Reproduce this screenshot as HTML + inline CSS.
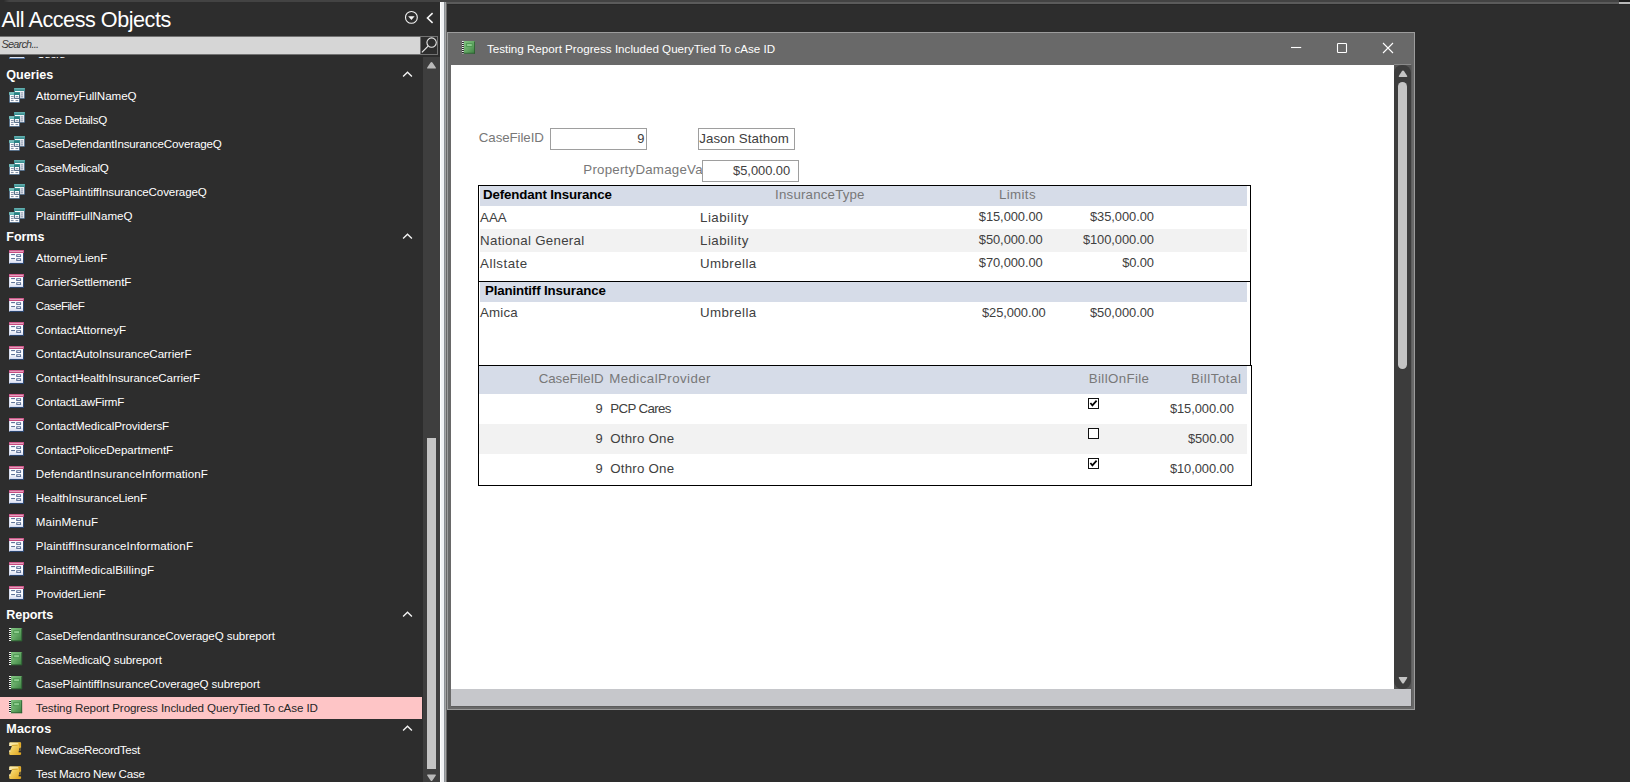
<!DOCTYPE html>
<html lang="en"><head><meta charset="utf-8"><title>Access</title>
<style>
html,body{margin:0;padding:0;}
body{width:1630px;height:782px;overflow:hidden;background:#2d2d2d;position:relative;font-family:"Liberation Sans",sans-serif;}
div,span,svg{position:absolute;}
.tx{white-space:nowrap;line-height:1;margin:0;padding:0;}
.ic{overflow:visible;}
</style></head><body>

<div style="left:0;top:0;width:1630px;height:2px;background:#434343"></div>
<div style="left:0;top:0;width:9px;height:2px;background:linear-gradient(90deg,#2d2d2d 40%,#434343)"></div>
<div style="left:446px;top:2px;width:1184px;height:2px;background:#5b5b5b"></div>
<div style="left:446px;top:4px;width:1184px;height:1px;background:#282828"></div>
<div style="left:1619px;top:0;width:11px;height:2px;background:#1c1c1c"></div>
<div style="left:1619px;top:2px;width:11px;height:2px;background:#b8b8b8"></div>
<div id="nav" style="left:0;top:2px;width:440px;height:780px;background:#2d2d2d"></div>
<div style="left:-1px;top:36px;width:439px;height:19px;box-sizing:border-box;border:1px solid #727272;background:#d6d6d6"></div>
<div style="left:420px;top:36px;width:18px;height:19px;box-sizing:border-box;border:1px solid #727272;background:#2d2d2d"></div>
<svg style="left:420px;top:36px" width="18" height="19" viewBox="0 0 18 19"><circle cx="11.6" cy="6.6" r="4.7" fill="none" stroke="#e8e8e8" stroke-width="1.1"/><path d="M8.1 10.1 L1.9 16.4" stroke="#e8e8e8" stroke-width="1.2" fill="none"/></svg>
<svg style="left:403px;top:10px" width="17" height="16" viewBox="0 0 17 16"><circle cx="8.4" cy="7.4" r="5.9" fill="none" stroke="#f4f4f4" stroke-width="1.1"/><path d="M5.2 6.2 L11.6 6.2 L8.4 10 Z" fill="#f4f4f4"/></svg>
<svg style="left:424px;top:9px" width="12" height="18" viewBox="0 0 12 18"><path d="M8.6 4.2 L3.5 9 L8.6 13.8" fill="none" stroke="#f4f4f4" stroke-width="1.6"/></svg>
<div style="left:0;top:57px;width:422px;height:3px;overflow:hidden"><div style="left:9px;top:-11px;width:16px;height:13px;background:#dfe6f3;border:1px solid #4c6a92;border-top:0;box-sizing:border-box"></div><span class="tx" style="left:37px;top:-9px;font-size:11.6px;letter-spacing:-0.5px;color:#fff">Users</span></div>
<div style="left:0;top:697px;width:422px;height:22px;background:#fec5c6"></div>
<div style="left:423px;top:57px;width:17px;height:725px;background:#3e3e3e"></div>
<div style="left:427px;top:438px;width:9px;height:331px;background:#c4c4c4"></div>
<svg style="left:426px;top:61px" width="12" height="9" viewBox="0 0 12 9"><path d="M5.5 1 Q6 1 6.4 1.6 L9.8 6.4 Q10.3 7.6 9.2 7.6 L1.8 7.6 Q0.7 7.6 1.2 6.4 L4.6 1.6 Q5 1 5.5 1Z" fill="#b9b9b9"/></svg>
<svg style="left:426px;top:773px" width="12" height="9" viewBox="0 0 12 9"><path d="M5.5 8 Q6 8 6.4 7.4 L9.8 2.6 Q10.3 1.4 9.2 1.4 L1.8 1.4 Q0.7 1.4 1.2 2.6 L4.6 7.4 Q5 8 5.5 8Z" fill="#b9b9b9"/></svg>
<svg style="left:401px;top:70px" width="12" height="8" viewBox="0 0 12 8"><path d="M2.1 6.6 L6.5 2.3 L10.9 6.6" fill="none" stroke="#f4f4f4" stroke-width="1.4"/></svg>
<svg style="left:401px;top:232px" width="12" height="8" viewBox="0 0 12 8"><path d="M2.1 6.6 L6.5 2.3 L10.9 6.6" fill="none" stroke="#f4f4f4" stroke-width="1.4"/></svg>
<svg style="left:401px;top:610px" width="12" height="8" viewBox="0 0 12 8"><path d="M2.1 6.6 L6.5 2.3 L10.9 6.6" fill="none" stroke="#f4f4f4" stroke-width="1.4"/></svg>
<svg style="left:401px;top:724px" width="12" height="8" viewBox="0 0 12 8"><path d="M2.1 6.6 L6.5 2.3 L10.9 6.6" fill="none" stroke="#f4f4f4" stroke-width="1.4"/></svg>
<svg class="ic" style="left:9px;top:88px" width="16" height="15" viewBox="0 0 16 15">
<rect x="5" y="0" width="11" height="11" fill="#33506f"/><rect x="5" y="0" width="11" height="3" fill="#3a8f90"/><rect x="5.3" y="0.4" width="10.4" height="0.9" fill="#7fc4c2"/>
<rect x="5.8" y="3" width="9.4" height="7.2" fill="#ffffff"/><rect x="11" y="3.4" width="3.8" height="6.6" fill="#e6e9f1"/>
<rect x="11.7" y="4.4" width="2.4" height="1" fill="#8693a8"/><rect x="11.7" y="6.4" width="2.4" height="1" fill="#8693a8"/><rect x="11.7" y="8.3" width="2.4" height="1" fill="#8693a8"/>
<rect x="0" y="4.2" width="11" height="10.8" fill="#33506f"/><rect x="0" y="4.2" width="11" height="2.8" fill="#62b3b1"/><rect x="0.3" y="4.5" width="10.4" height="0.9" fill="#9ad5d1"/><rect x="5" y="4.3" width="5.8" height="2.7" fill="#2a8384"/>
<rect x="0.8" y="7" width="9.4" height="7.2" fill="#ffffff"/>
<rect x="1.9" y="8" width="2.7" height="1.1" fill="#8693a8"/><rect x="1.9" y="10" width="2.7" height="1.1" fill="#8693a8"/><rect x="1.9" y="12" width="2.7" height="1.1" fill="#8693a8"/>
<path d="M5.4 7 V10.4 H10.6 V7" fill="#ffffff" stroke="#33506f" stroke-width="0.9"/><rect x="6.7" y="8.1" width="2.6" height="1.1" fill="#8693a8"/>
<rect x="6.5" y="12" width="2.7" height="1.1" fill="#8693a8"/>
</svg>
<svg class="ic" style="left:9px;top:112px" width="16" height="15" viewBox="0 0 16 15">
<rect x="5" y="0" width="11" height="11" fill="#33506f"/><rect x="5" y="0" width="11" height="3" fill="#3a8f90"/><rect x="5.3" y="0.4" width="10.4" height="0.9" fill="#7fc4c2"/>
<rect x="5.8" y="3" width="9.4" height="7.2" fill="#ffffff"/><rect x="11" y="3.4" width="3.8" height="6.6" fill="#e6e9f1"/>
<rect x="11.7" y="4.4" width="2.4" height="1" fill="#8693a8"/><rect x="11.7" y="6.4" width="2.4" height="1" fill="#8693a8"/><rect x="11.7" y="8.3" width="2.4" height="1" fill="#8693a8"/>
<rect x="0" y="4.2" width="11" height="10.8" fill="#33506f"/><rect x="0" y="4.2" width="11" height="2.8" fill="#62b3b1"/><rect x="0.3" y="4.5" width="10.4" height="0.9" fill="#9ad5d1"/><rect x="5" y="4.3" width="5.8" height="2.7" fill="#2a8384"/>
<rect x="0.8" y="7" width="9.4" height="7.2" fill="#ffffff"/>
<rect x="1.9" y="8" width="2.7" height="1.1" fill="#8693a8"/><rect x="1.9" y="10" width="2.7" height="1.1" fill="#8693a8"/><rect x="1.9" y="12" width="2.7" height="1.1" fill="#8693a8"/>
<path d="M5.4 7 V10.4 H10.6 V7" fill="#ffffff" stroke="#33506f" stroke-width="0.9"/><rect x="6.7" y="8.1" width="2.6" height="1.1" fill="#8693a8"/>
<rect x="6.5" y="12" width="2.7" height="1.1" fill="#8693a8"/>
</svg>
<svg class="ic" style="left:9px;top:136px" width="16" height="15" viewBox="0 0 16 15">
<rect x="5" y="0" width="11" height="11" fill="#33506f"/><rect x="5" y="0" width="11" height="3" fill="#3a8f90"/><rect x="5.3" y="0.4" width="10.4" height="0.9" fill="#7fc4c2"/>
<rect x="5.8" y="3" width="9.4" height="7.2" fill="#ffffff"/><rect x="11" y="3.4" width="3.8" height="6.6" fill="#e6e9f1"/>
<rect x="11.7" y="4.4" width="2.4" height="1" fill="#8693a8"/><rect x="11.7" y="6.4" width="2.4" height="1" fill="#8693a8"/><rect x="11.7" y="8.3" width="2.4" height="1" fill="#8693a8"/>
<rect x="0" y="4.2" width="11" height="10.8" fill="#33506f"/><rect x="0" y="4.2" width="11" height="2.8" fill="#62b3b1"/><rect x="0.3" y="4.5" width="10.4" height="0.9" fill="#9ad5d1"/><rect x="5" y="4.3" width="5.8" height="2.7" fill="#2a8384"/>
<rect x="0.8" y="7" width="9.4" height="7.2" fill="#ffffff"/>
<rect x="1.9" y="8" width="2.7" height="1.1" fill="#8693a8"/><rect x="1.9" y="10" width="2.7" height="1.1" fill="#8693a8"/><rect x="1.9" y="12" width="2.7" height="1.1" fill="#8693a8"/>
<path d="M5.4 7 V10.4 H10.6 V7" fill="#ffffff" stroke="#33506f" stroke-width="0.9"/><rect x="6.7" y="8.1" width="2.6" height="1.1" fill="#8693a8"/>
<rect x="6.5" y="12" width="2.7" height="1.1" fill="#8693a8"/>
</svg>
<svg class="ic" style="left:9px;top:160px" width="16" height="15" viewBox="0 0 16 15">
<rect x="5" y="0" width="11" height="11" fill="#33506f"/><rect x="5" y="0" width="11" height="3" fill="#3a8f90"/><rect x="5.3" y="0.4" width="10.4" height="0.9" fill="#7fc4c2"/>
<rect x="5.8" y="3" width="9.4" height="7.2" fill="#ffffff"/><rect x="11" y="3.4" width="3.8" height="6.6" fill="#e6e9f1"/>
<rect x="11.7" y="4.4" width="2.4" height="1" fill="#8693a8"/><rect x="11.7" y="6.4" width="2.4" height="1" fill="#8693a8"/><rect x="11.7" y="8.3" width="2.4" height="1" fill="#8693a8"/>
<rect x="0" y="4.2" width="11" height="10.8" fill="#33506f"/><rect x="0" y="4.2" width="11" height="2.8" fill="#62b3b1"/><rect x="0.3" y="4.5" width="10.4" height="0.9" fill="#9ad5d1"/><rect x="5" y="4.3" width="5.8" height="2.7" fill="#2a8384"/>
<rect x="0.8" y="7" width="9.4" height="7.2" fill="#ffffff"/>
<rect x="1.9" y="8" width="2.7" height="1.1" fill="#8693a8"/><rect x="1.9" y="10" width="2.7" height="1.1" fill="#8693a8"/><rect x="1.9" y="12" width="2.7" height="1.1" fill="#8693a8"/>
<path d="M5.4 7 V10.4 H10.6 V7" fill="#ffffff" stroke="#33506f" stroke-width="0.9"/><rect x="6.7" y="8.1" width="2.6" height="1.1" fill="#8693a8"/>
<rect x="6.5" y="12" width="2.7" height="1.1" fill="#8693a8"/>
</svg>
<svg class="ic" style="left:9px;top:184px" width="16" height="15" viewBox="0 0 16 15">
<rect x="5" y="0" width="11" height="11" fill="#33506f"/><rect x="5" y="0" width="11" height="3" fill="#3a8f90"/><rect x="5.3" y="0.4" width="10.4" height="0.9" fill="#7fc4c2"/>
<rect x="5.8" y="3" width="9.4" height="7.2" fill="#ffffff"/><rect x="11" y="3.4" width="3.8" height="6.6" fill="#e6e9f1"/>
<rect x="11.7" y="4.4" width="2.4" height="1" fill="#8693a8"/><rect x="11.7" y="6.4" width="2.4" height="1" fill="#8693a8"/><rect x="11.7" y="8.3" width="2.4" height="1" fill="#8693a8"/>
<rect x="0" y="4.2" width="11" height="10.8" fill="#33506f"/><rect x="0" y="4.2" width="11" height="2.8" fill="#62b3b1"/><rect x="0.3" y="4.5" width="10.4" height="0.9" fill="#9ad5d1"/><rect x="5" y="4.3" width="5.8" height="2.7" fill="#2a8384"/>
<rect x="0.8" y="7" width="9.4" height="7.2" fill="#ffffff"/>
<rect x="1.9" y="8" width="2.7" height="1.1" fill="#8693a8"/><rect x="1.9" y="10" width="2.7" height="1.1" fill="#8693a8"/><rect x="1.9" y="12" width="2.7" height="1.1" fill="#8693a8"/>
<path d="M5.4 7 V10.4 H10.6 V7" fill="#ffffff" stroke="#33506f" stroke-width="0.9"/><rect x="6.7" y="8.1" width="2.6" height="1.1" fill="#8693a8"/>
<rect x="6.5" y="12" width="2.7" height="1.1" fill="#8693a8"/>
</svg>
<svg class="ic" style="left:9px;top:208px" width="16" height="15" viewBox="0 0 16 15">
<rect x="5" y="0" width="11" height="11" fill="#33506f"/><rect x="5" y="0" width="11" height="3" fill="#3a8f90"/><rect x="5.3" y="0.4" width="10.4" height="0.9" fill="#7fc4c2"/>
<rect x="5.8" y="3" width="9.4" height="7.2" fill="#ffffff"/><rect x="11" y="3.4" width="3.8" height="6.6" fill="#e6e9f1"/>
<rect x="11.7" y="4.4" width="2.4" height="1" fill="#8693a8"/><rect x="11.7" y="6.4" width="2.4" height="1" fill="#8693a8"/><rect x="11.7" y="8.3" width="2.4" height="1" fill="#8693a8"/>
<rect x="0" y="4.2" width="11" height="10.8" fill="#33506f"/><rect x="0" y="4.2" width="11" height="2.8" fill="#62b3b1"/><rect x="0.3" y="4.5" width="10.4" height="0.9" fill="#9ad5d1"/><rect x="5" y="4.3" width="5.8" height="2.7" fill="#2a8384"/>
<rect x="0.8" y="7" width="9.4" height="7.2" fill="#ffffff"/>
<rect x="1.9" y="8" width="2.7" height="1.1" fill="#8693a8"/><rect x="1.9" y="10" width="2.7" height="1.1" fill="#8693a8"/><rect x="1.9" y="12" width="2.7" height="1.1" fill="#8693a8"/>
<path d="M5.4 7 V10.4 H10.6 V7" fill="#ffffff" stroke="#33506f" stroke-width="0.9"/><rect x="6.7" y="8.1" width="2.6" height="1.1" fill="#8693a8"/>
<rect x="6.5" y="12" width="2.7" height="1.1" fill="#8693a8"/>
</svg>
<svg class="ic" style="left:9px;top:250px" width="15" height="14" viewBox="0 0 15 14">
<rect x="0" y="0" width="15" height="14" fill="#2b456c"/><rect x="0" y="0" width="15" height="3" fill="#c64c80"/><rect x="0.6" y="0.8" width="13.6" height="1.2" fill="#e59fbd"/>
<rect x="0" y="3" width="14" height="10" fill="#fbfcff"/><rect x="0" y="3" width="0.7" height="10.6" fill="#c9d1e8"/><rect x="0.7" y="10.2" width="13.3" height="2.8" fill="#e4e8f6"/><rect x="0.7" y="12" width="13.3" height="1" fill="#d3daf0"/>
<rect x="2.1" y="4.1" width="3.9" height="1" fill="#50668f"/><rect x="2.1" y="8.1" width="3.9" height="1" fill="#50668f"/>
<rect x="7.2" y="4.2" width="4.9" height="2.8" rx="0.4" fill="#586d96"/><rect x="8.3" y="5.1" width="2.8" height="1" fill="#f4f6fb"/>
<rect x="7.2" y="8.2" width="4.9" height="2.8" rx="0.4" fill="#586d96"/><rect x="8.3" y="9.1" width="2.8" height="1" fill="#f4f6fb"/>
</svg>
<svg class="ic" style="left:9px;top:274px" width="15" height="14" viewBox="0 0 15 14">
<rect x="0" y="0" width="15" height="14" fill="#2b456c"/><rect x="0" y="0" width="15" height="3" fill="#c64c80"/><rect x="0.6" y="0.8" width="13.6" height="1.2" fill="#e59fbd"/>
<rect x="0" y="3" width="14" height="10" fill="#fbfcff"/><rect x="0" y="3" width="0.7" height="10.6" fill="#c9d1e8"/><rect x="0.7" y="10.2" width="13.3" height="2.8" fill="#e4e8f6"/><rect x="0.7" y="12" width="13.3" height="1" fill="#d3daf0"/>
<rect x="2.1" y="4.1" width="3.9" height="1" fill="#50668f"/><rect x="2.1" y="8.1" width="3.9" height="1" fill="#50668f"/>
<rect x="7.2" y="4.2" width="4.9" height="2.8" rx="0.4" fill="#586d96"/><rect x="8.3" y="5.1" width="2.8" height="1" fill="#f4f6fb"/>
<rect x="7.2" y="8.2" width="4.9" height="2.8" rx="0.4" fill="#586d96"/><rect x="8.3" y="9.1" width="2.8" height="1" fill="#f4f6fb"/>
</svg>
<svg class="ic" style="left:9px;top:298px" width="15" height="14" viewBox="0 0 15 14">
<rect x="0" y="0" width="15" height="14" fill="#2b456c"/><rect x="0" y="0" width="15" height="3" fill="#c64c80"/><rect x="0.6" y="0.8" width="13.6" height="1.2" fill="#e59fbd"/>
<rect x="0" y="3" width="14" height="10" fill="#fbfcff"/><rect x="0" y="3" width="0.7" height="10.6" fill="#c9d1e8"/><rect x="0.7" y="10.2" width="13.3" height="2.8" fill="#e4e8f6"/><rect x="0.7" y="12" width="13.3" height="1" fill="#d3daf0"/>
<rect x="2.1" y="4.1" width="3.9" height="1" fill="#50668f"/><rect x="2.1" y="8.1" width="3.9" height="1" fill="#50668f"/>
<rect x="7.2" y="4.2" width="4.9" height="2.8" rx="0.4" fill="#586d96"/><rect x="8.3" y="5.1" width="2.8" height="1" fill="#f4f6fb"/>
<rect x="7.2" y="8.2" width="4.9" height="2.8" rx="0.4" fill="#586d96"/><rect x="8.3" y="9.1" width="2.8" height="1" fill="#f4f6fb"/>
</svg>
<svg class="ic" style="left:9px;top:322px" width="15" height="14" viewBox="0 0 15 14">
<rect x="0" y="0" width="15" height="14" fill="#2b456c"/><rect x="0" y="0" width="15" height="3" fill="#c64c80"/><rect x="0.6" y="0.8" width="13.6" height="1.2" fill="#e59fbd"/>
<rect x="0" y="3" width="14" height="10" fill="#fbfcff"/><rect x="0" y="3" width="0.7" height="10.6" fill="#c9d1e8"/><rect x="0.7" y="10.2" width="13.3" height="2.8" fill="#e4e8f6"/><rect x="0.7" y="12" width="13.3" height="1" fill="#d3daf0"/>
<rect x="2.1" y="4.1" width="3.9" height="1" fill="#50668f"/><rect x="2.1" y="8.1" width="3.9" height="1" fill="#50668f"/>
<rect x="7.2" y="4.2" width="4.9" height="2.8" rx="0.4" fill="#586d96"/><rect x="8.3" y="5.1" width="2.8" height="1" fill="#f4f6fb"/>
<rect x="7.2" y="8.2" width="4.9" height="2.8" rx="0.4" fill="#586d96"/><rect x="8.3" y="9.1" width="2.8" height="1" fill="#f4f6fb"/>
</svg>
<svg class="ic" style="left:9px;top:346px" width="15" height="14" viewBox="0 0 15 14">
<rect x="0" y="0" width="15" height="14" fill="#2b456c"/><rect x="0" y="0" width="15" height="3" fill="#c64c80"/><rect x="0.6" y="0.8" width="13.6" height="1.2" fill="#e59fbd"/>
<rect x="0" y="3" width="14" height="10" fill="#fbfcff"/><rect x="0" y="3" width="0.7" height="10.6" fill="#c9d1e8"/><rect x="0.7" y="10.2" width="13.3" height="2.8" fill="#e4e8f6"/><rect x="0.7" y="12" width="13.3" height="1" fill="#d3daf0"/>
<rect x="2.1" y="4.1" width="3.9" height="1" fill="#50668f"/><rect x="2.1" y="8.1" width="3.9" height="1" fill="#50668f"/>
<rect x="7.2" y="4.2" width="4.9" height="2.8" rx="0.4" fill="#586d96"/><rect x="8.3" y="5.1" width="2.8" height="1" fill="#f4f6fb"/>
<rect x="7.2" y="8.2" width="4.9" height="2.8" rx="0.4" fill="#586d96"/><rect x="8.3" y="9.1" width="2.8" height="1" fill="#f4f6fb"/>
</svg>
<svg class="ic" style="left:9px;top:370px" width="15" height="14" viewBox="0 0 15 14">
<rect x="0" y="0" width="15" height="14" fill="#2b456c"/><rect x="0" y="0" width="15" height="3" fill="#c64c80"/><rect x="0.6" y="0.8" width="13.6" height="1.2" fill="#e59fbd"/>
<rect x="0" y="3" width="14" height="10" fill="#fbfcff"/><rect x="0" y="3" width="0.7" height="10.6" fill="#c9d1e8"/><rect x="0.7" y="10.2" width="13.3" height="2.8" fill="#e4e8f6"/><rect x="0.7" y="12" width="13.3" height="1" fill="#d3daf0"/>
<rect x="2.1" y="4.1" width="3.9" height="1" fill="#50668f"/><rect x="2.1" y="8.1" width="3.9" height="1" fill="#50668f"/>
<rect x="7.2" y="4.2" width="4.9" height="2.8" rx="0.4" fill="#586d96"/><rect x="8.3" y="5.1" width="2.8" height="1" fill="#f4f6fb"/>
<rect x="7.2" y="8.2" width="4.9" height="2.8" rx="0.4" fill="#586d96"/><rect x="8.3" y="9.1" width="2.8" height="1" fill="#f4f6fb"/>
</svg>
<svg class="ic" style="left:9px;top:394px" width="15" height="14" viewBox="0 0 15 14">
<rect x="0" y="0" width="15" height="14" fill="#2b456c"/><rect x="0" y="0" width="15" height="3" fill="#c64c80"/><rect x="0.6" y="0.8" width="13.6" height="1.2" fill="#e59fbd"/>
<rect x="0" y="3" width="14" height="10" fill="#fbfcff"/><rect x="0" y="3" width="0.7" height="10.6" fill="#c9d1e8"/><rect x="0.7" y="10.2" width="13.3" height="2.8" fill="#e4e8f6"/><rect x="0.7" y="12" width="13.3" height="1" fill="#d3daf0"/>
<rect x="2.1" y="4.1" width="3.9" height="1" fill="#50668f"/><rect x="2.1" y="8.1" width="3.9" height="1" fill="#50668f"/>
<rect x="7.2" y="4.2" width="4.9" height="2.8" rx="0.4" fill="#586d96"/><rect x="8.3" y="5.1" width="2.8" height="1" fill="#f4f6fb"/>
<rect x="7.2" y="8.2" width="4.9" height="2.8" rx="0.4" fill="#586d96"/><rect x="8.3" y="9.1" width="2.8" height="1" fill="#f4f6fb"/>
</svg>
<svg class="ic" style="left:9px;top:418px" width="15" height="14" viewBox="0 0 15 14">
<rect x="0" y="0" width="15" height="14" fill="#2b456c"/><rect x="0" y="0" width="15" height="3" fill="#c64c80"/><rect x="0.6" y="0.8" width="13.6" height="1.2" fill="#e59fbd"/>
<rect x="0" y="3" width="14" height="10" fill="#fbfcff"/><rect x="0" y="3" width="0.7" height="10.6" fill="#c9d1e8"/><rect x="0.7" y="10.2" width="13.3" height="2.8" fill="#e4e8f6"/><rect x="0.7" y="12" width="13.3" height="1" fill="#d3daf0"/>
<rect x="2.1" y="4.1" width="3.9" height="1" fill="#50668f"/><rect x="2.1" y="8.1" width="3.9" height="1" fill="#50668f"/>
<rect x="7.2" y="4.2" width="4.9" height="2.8" rx="0.4" fill="#586d96"/><rect x="8.3" y="5.1" width="2.8" height="1" fill="#f4f6fb"/>
<rect x="7.2" y="8.2" width="4.9" height="2.8" rx="0.4" fill="#586d96"/><rect x="8.3" y="9.1" width="2.8" height="1" fill="#f4f6fb"/>
</svg>
<svg class="ic" style="left:9px;top:442px" width="15" height="14" viewBox="0 0 15 14">
<rect x="0" y="0" width="15" height="14" fill="#2b456c"/><rect x="0" y="0" width="15" height="3" fill="#c64c80"/><rect x="0.6" y="0.8" width="13.6" height="1.2" fill="#e59fbd"/>
<rect x="0" y="3" width="14" height="10" fill="#fbfcff"/><rect x="0" y="3" width="0.7" height="10.6" fill="#c9d1e8"/><rect x="0.7" y="10.2" width="13.3" height="2.8" fill="#e4e8f6"/><rect x="0.7" y="12" width="13.3" height="1" fill="#d3daf0"/>
<rect x="2.1" y="4.1" width="3.9" height="1" fill="#50668f"/><rect x="2.1" y="8.1" width="3.9" height="1" fill="#50668f"/>
<rect x="7.2" y="4.2" width="4.9" height="2.8" rx="0.4" fill="#586d96"/><rect x="8.3" y="5.1" width="2.8" height="1" fill="#f4f6fb"/>
<rect x="7.2" y="8.2" width="4.9" height="2.8" rx="0.4" fill="#586d96"/><rect x="8.3" y="9.1" width="2.8" height="1" fill="#f4f6fb"/>
</svg>
<svg class="ic" style="left:9px;top:466px" width="15" height="14" viewBox="0 0 15 14">
<rect x="0" y="0" width="15" height="14" fill="#2b456c"/><rect x="0" y="0" width="15" height="3" fill="#c64c80"/><rect x="0.6" y="0.8" width="13.6" height="1.2" fill="#e59fbd"/>
<rect x="0" y="3" width="14" height="10" fill="#fbfcff"/><rect x="0" y="3" width="0.7" height="10.6" fill="#c9d1e8"/><rect x="0.7" y="10.2" width="13.3" height="2.8" fill="#e4e8f6"/><rect x="0.7" y="12" width="13.3" height="1" fill="#d3daf0"/>
<rect x="2.1" y="4.1" width="3.9" height="1" fill="#50668f"/><rect x="2.1" y="8.1" width="3.9" height="1" fill="#50668f"/>
<rect x="7.2" y="4.2" width="4.9" height="2.8" rx="0.4" fill="#586d96"/><rect x="8.3" y="5.1" width="2.8" height="1" fill="#f4f6fb"/>
<rect x="7.2" y="8.2" width="4.9" height="2.8" rx="0.4" fill="#586d96"/><rect x="8.3" y="9.1" width="2.8" height="1" fill="#f4f6fb"/>
</svg>
<svg class="ic" style="left:9px;top:490px" width="15" height="14" viewBox="0 0 15 14">
<rect x="0" y="0" width="15" height="14" fill="#2b456c"/><rect x="0" y="0" width="15" height="3" fill="#c64c80"/><rect x="0.6" y="0.8" width="13.6" height="1.2" fill="#e59fbd"/>
<rect x="0" y="3" width="14" height="10" fill="#fbfcff"/><rect x="0" y="3" width="0.7" height="10.6" fill="#c9d1e8"/><rect x="0.7" y="10.2" width="13.3" height="2.8" fill="#e4e8f6"/><rect x="0.7" y="12" width="13.3" height="1" fill="#d3daf0"/>
<rect x="2.1" y="4.1" width="3.9" height="1" fill="#50668f"/><rect x="2.1" y="8.1" width="3.9" height="1" fill="#50668f"/>
<rect x="7.2" y="4.2" width="4.9" height="2.8" rx="0.4" fill="#586d96"/><rect x="8.3" y="5.1" width="2.8" height="1" fill="#f4f6fb"/>
<rect x="7.2" y="8.2" width="4.9" height="2.8" rx="0.4" fill="#586d96"/><rect x="8.3" y="9.1" width="2.8" height="1" fill="#f4f6fb"/>
</svg>
<svg class="ic" style="left:9px;top:514px" width="15" height="14" viewBox="0 0 15 14">
<rect x="0" y="0" width="15" height="14" fill="#2b456c"/><rect x="0" y="0" width="15" height="3" fill="#c64c80"/><rect x="0.6" y="0.8" width="13.6" height="1.2" fill="#e59fbd"/>
<rect x="0" y="3" width="14" height="10" fill="#fbfcff"/><rect x="0" y="3" width="0.7" height="10.6" fill="#c9d1e8"/><rect x="0.7" y="10.2" width="13.3" height="2.8" fill="#e4e8f6"/><rect x="0.7" y="12" width="13.3" height="1" fill="#d3daf0"/>
<rect x="2.1" y="4.1" width="3.9" height="1" fill="#50668f"/><rect x="2.1" y="8.1" width="3.9" height="1" fill="#50668f"/>
<rect x="7.2" y="4.2" width="4.9" height="2.8" rx="0.4" fill="#586d96"/><rect x="8.3" y="5.1" width="2.8" height="1" fill="#f4f6fb"/>
<rect x="7.2" y="8.2" width="4.9" height="2.8" rx="0.4" fill="#586d96"/><rect x="8.3" y="9.1" width="2.8" height="1" fill="#f4f6fb"/>
</svg>
<svg class="ic" style="left:9px;top:538px" width="15" height="14" viewBox="0 0 15 14">
<rect x="0" y="0" width="15" height="14" fill="#2b456c"/><rect x="0" y="0" width="15" height="3" fill="#c64c80"/><rect x="0.6" y="0.8" width="13.6" height="1.2" fill="#e59fbd"/>
<rect x="0" y="3" width="14" height="10" fill="#fbfcff"/><rect x="0" y="3" width="0.7" height="10.6" fill="#c9d1e8"/><rect x="0.7" y="10.2" width="13.3" height="2.8" fill="#e4e8f6"/><rect x="0.7" y="12" width="13.3" height="1" fill="#d3daf0"/>
<rect x="2.1" y="4.1" width="3.9" height="1" fill="#50668f"/><rect x="2.1" y="8.1" width="3.9" height="1" fill="#50668f"/>
<rect x="7.2" y="4.2" width="4.9" height="2.8" rx="0.4" fill="#586d96"/><rect x="8.3" y="5.1" width="2.8" height="1" fill="#f4f6fb"/>
<rect x="7.2" y="8.2" width="4.9" height="2.8" rx="0.4" fill="#586d96"/><rect x="8.3" y="9.1" width="2.8" height="1" fill="#f4f6fb"/>
</svg>
<svg class="ic" style="left:9px;top:562px" width="15" height="14" viewBox="0 0 15 14">
<rect x="0" y="0" width="15" height="14" fill="#2b456c"/><rect x="0" y="0" width="15" height="3" fill="#c64c80"/><rect x="0.6" y="0.8" width="13.6" height="1.2" fill="#e59fbd"/>
<rect x="0" y="3" width="14" height="10" fill="#fbfcff"/><rect x="0" y="3" width="0.7" height="10.6" fill="#c9d1e8"/><rect x="0.7" y="10.2" width="13.3" height="2.8" fill="#e4e8f6"/><rect x="0.7" y="12" width="13.3" height="1" fill="#d3daf0"/>
<rect x="2.1" y="4.1" width="3.9" height="1" fill="#50668f"/><rect x="2.1" y="8.1" width="3.9" height="1" fill="#50668f"/>
<rect x="7.2" y="4.2" width="4.9" height="2.8" rx="0.4" fill="#586d96"/><rect x="8.3" y="5.1" width="2.8" height="1" fill="#f4f6fb"/>
<rect x="7.2" y="8.2" width="4.9" height="2.8" rx="0.4" fill="#586d96"/><rect x="8.3" y="9.1" width="2.8" height="1" fill="#f4f6fb"/>
</svg>
<svg class="ic" style="left:9px;top:586px" width="15" height="14" viewBox="0 0 15 14">
<rect x="0" y="0" width="15" height="14" fill="#2b456c"/><rect x="0" y="0" width="15" height="3" fill="#c64c80"/><rect x="0.6" y="0.8" width="13.6" height="1.2" fill="#e59fbd"/>
<rect x="0" y="3" width="14" height="10" fill="#fbfcff"/><rect x="0" y="3" width="0.7" height="10.6" fill="#c9d1e8"/><rect x="0.7" y="10.2" width="13.3" height="2.8" fill="#e4e8f6"/><rect x="0.7" y="12" width="13.3" height="1" fill="#d3daf0"/>
<rect x="2.1" y="4.1" width="3.9" height="1" fill="#50668f"/><rect x="2.1" y="8.1" width="3.9" height="1" fill="#50668f"/>
<rect x="7.2" y="4.2" width="4.9" height="2.8" rx="0.4" fill="#586d96"/><rect x="8.3" y="5.1" width="2.8" height="1" fill="#f4f6fb"/>
<rect x="7.2" y="8.2" width="4.9" height="2.8" rx="0.4" fill="#586d96"/><rect x="8.3" y="9.1" width="2.8" height="1" fill="#f4f6fb"/>
</svg>
<svg class="ic" style="left:9px;top:628px" width="14" height="14" viewBox="0 0 14 14">
<defs><linearGradient id="g0" x1="0" y1="0" x2="1" y2="1"><stop offset="0" stop-color="#82c382"/><stop offset="0.55" stop-color="#61a562"/><stop offset="1" stop-color="#3a7e3f"/></linearGradient></defs>
<rect x="1.8" y="0" width="11.3" height="13.1" fill="url(#g0)"/><rect x="12.3" y="0.4" width="0.8" height="12.7" fill="#2c5a31"/><rect x="1.8" y="12.4" width="11.3" height="0.8" fill="#2c5a31"/>
<rect x="4.7" y="2.7" width="5.7" height="3" fill="#8dcc8e" stroke="#4a964e" stroke-width="0.9"/>
<rect x="0" y="0" width="2" height="13" fill="#262626"/>
<path d="M0 0h2v1h-2z M0 2h2v1h-2z M0 4h2v1h-2z M0 6h2v1h-2z M0 8h2v1h-2z M0 10h2v1h-2z M0 12h2v1h-2z" fill="#f2f2f2"/>
</svg>
<svg class="ic" style="left:9px;top:652px" width="14" height="14" viewBox="0 0 14 14">
<defs><linearGradient id="g1" x1="0" y1="0" x2="1" y2="1"><stop offset="0" stop-color="#82c382"/><stop offset="0.55" stop-color="#61a562"/><stop offset="1" stop-color="#3a7e3f"/></linearGradient></defs>
<rect x="1.8" y="0" width="11.3" height="13.1" fill="url(#g1)"/><rect x="12.3" y="0.4" width="0.8" height="12.7" fill="#2c5a31"/><rect x="1.8" y="12.4" width="11.3" height="0.8" fill="#2c5a31"/>
<rect x="4.7" y="2.7" width="5.7" height="3" fill="#8dcc8e" stroke="#4a964e" stroke-width="0.9"/>
<rect x="0" y="0" width="2" height="13" fill="#262626"/>
<path d="M0 0h2v1h-2z M0 2h2v1h-2z M0 4h2v1h-2z M0 6h2v1h-2z M0 8h2v1h-2z M0 10h2v1h-2z M0 12h2v1h-2z" fill="#f2f2f2"/>
</svg>
<svg class="ic" style="left:9px;top:676px" width="14" height="14" viewBox="0 0 14 14">
<defs><linearGradient id="g2" x1="0" y1="0" x2="1" y2="1"><stop offset="0" stop-color="#82c382"/><stop offset="0.55" stop-color="#61a562"/><stop offset="1" stop-color="#3a7e3f"/></linearGradient></defs>
<rect x="1.8" y="0" width="11.3" height="13.1" fill="url(#g2)"/><rect x="12.3" y="0.4" width="0.8" height="12.7" fill="#2c5a31"/><rect x="1.8" y="12.4" width="11.3" height="0.8" fill="#2c5a31"/>
<rect x="4.7" y="2.7" width="5.7" height="3" fill="#8dcc8e" stroke="#4a964e" stroke-width="0.9"/>
<rect x="0" y="0" width="2" height="13" fill="#262626"/>
<path d="M0 0h2v1h-2z M0 2h2v1h-2z M0 4h2v1h-2z M0 6h2v1h-2z M0 8h2v1h-2z M0 10h2v1h-2z M0 12h2v1h-2z" fill="#f2f2f2"/>
</svg>
<svg class="ic" style="left:9px;top:700px" width="14" height="14" viewBox="0 0 14 14">
<defs><linearGradient id="g3" x1="0" y1="0" x2="1" y2="1"><stop offset="0" stop-color="#82c382"/><stop offset="0.55" stop-color="#61a562"/><stop offset="1" stop-color="#3a7e3f"/></linearGradient></defs>
<rect x="1.8" y="0" width="11.3" height="13.1" fill="url(#g3)"/><rect x="12.3" y="0.4" width="0.8" height="12.7" fill="#2c5a31"/><rect x="1.8" y="12.4" width="11.3" height="0.8" fill="#2c5a31"/>
<rect x="4.7" y="2.7" width="5.7" height="3" fill="#8dcc8e" stroke="#4a964e" stroke-width="0.9"/>
<rect x="0" y="0" width="2" height="13" fill="#262626"/>
<path d="M0 0h2v1h-2z M0 2h2v1h-2z M0 4h2v1h-2z M0 6h2v1h-2z M0 8h2v1h-2z M0 10h2v1h-2z M0 12h2v1h-2z" fill="#f2f2f2"/>
</svg>
<svg class="ic" style="left:9px;top:742px" width="13" height="14" viewBox="0 0 13 14">
<defs><linearGradient id="m0" x1="0" y1="0" x2="1" y2="1"><stop offset="0" stop-color="#fbeaa6"/><stop offset="0.45" stop-color="#f1cc58"/><stop offset="1" stop-color="#dea21c"/></linearGradient></defs>
<path d="M0.8 0.3 L11.4 0.2 L12.1 1 L12.1 5.7 L10.5 5.8 L9.5 10.3 L12.1 10.4 L12.1 12.3 L11.3 13 L1 13 L0.2 12.3 L0.2 8.5 L1.1 8.4 L2.9 3.9 L0.2 3.8 L0.2 1 Z" fill="url(#m0)"/>
<path d="M0.6 1.5 L9 1.4 L9 2.3 L0.6 2.4Z" fill="#fdf3c4"/>
<path d="M3 2.9 L8.6 2.8 L8.6 3.6 L3 3.7Z" fill="#c99a1e"/>
<path d="M9.4 0.6 L11.8 0.8 L11.8 4.4 L10.2 5 Z" fill="#e0a622"/>
<path d="M10.8 6.5 h0.9 v0.9 h-0.9z M10.5 8.2 h0.9 v0.9 h-0.9z" fill="#e2b53c"/>
<path d="M0.3 3 h1.5 v0.9 h-1.5z M0.3 8.6 h1.1 v1.2 h-1.1z" fill="#f6efe0"/>
</svg>
<svg class="ic" style="left:9px;top:766px" width="13" height="14" viewBox="0 0 13 14">
<defs><linearGradient id="m1" x1="0" y1="0" x2="1" y2="1"><stop offset="0" stop-color="#fbeaa6"/><stop offset="0.45" stop-color="#f1cc58"/><stop offset="1" stop-color="#dea21c"/></linearGradient></defs>
<path d="M0.8 0.3 L11.4 0.2 L12.1 1 L12.1 5.7 L10.5 5.8 L9.5 10.3 L12.1 10.4 L12.1 12.3 L11.3 13 L1 13 L0.2 12.3 L0.2 8.5 L1.1 8.4 L2.9 3.9 L0.2 3.8 L0.2 1 Z" fill="url(#m1)"/>
<path d="M0.6 1.5 L9 1.4 L9 2.3 L0.6 2.4Z" fill="#fdf3c4"/>
<path d="M3 2.9 L8.6 2.8 L8.6 3.6 L3 3.7Z" fill="#c99a1e"/>
<path d="M9.4 0.6 L11.8 0.8 L11.8 4.4 L10.2 5 Z" fill="#e0a622"/>
<path d="M10.8 6.5 h0.9 v0.9 h-0.9z M10.5 8.2 h0.9 v0.9 h-0.9z" fill="#e2b53c"/>
<path d="M0.3 3 h1.5 v0.9 h-1.5z M0.3 8.6 h1.1 v1.2 h-1.1z" fill="#f6efe0"/>
</svg>
<div style="left:440px;top:2px;width:4px;height:780px;background:#f1f2f4"></div>
<div style="left:440px;top:2px;width:1px;height:780px;background:#fdfdfd"></div>
<div style="left:444px;top:2px;width:1px;height:780px;background:#8c9196"></div>
<div style="left:445px;top:2px;width:1px;height:780px;background:#a4a4a4"></div>
<div style="left:446px;top:2px;width:1px;height:780px;background:#686868"></div>
<div id="win" style="left:447px;top:32px;width:968px;height:678px;background:#696969;box-sizing:border-box;border:1px solid #9c9c9c"></div>
<div style="left:451px;top:65px;width:943px;height:624px;background:#ffffff"></div>
<div style="left:451px;top:689px;width:960px;height:17px;background:#c6c7cb"></div>
<div style="left:1394px;top:65px;width:17px;height:624px;background:#555555;z-index:0"></div>
<div style="left:1394px;top:65px;width:17px;height:624px;background:#3c3c3c;border-radius:8px"></div>
<div style="left:1394px;top:80px;width:17px;height:594px;background:#3c3c3c"></div>
<div style="left:1394px;top:64px;width:17px;height:1px;background:#8a8a8a"></div>
<div style="left:1411px;top:65px;width:1px;height:642px;background:#5d5d5d"></div>
<div style="left:451px;top:706px;width:961px;height:1px;background:#5d5d5d"></div>
<div style="left:1398px;top:82px;width:9px;height:287px;background:#c4c4c4;border-radius:4.5px"></div>
<svg style="left:1396.5px;top:69px" width="12" height="10" viewBox="0 0 12 10"><path d="M6 1.4 Q6.6 1.4 7 2 L10.2 7 Q10.6 8 9.6 8 L2.4 8 Q1.4 8 1.8 7 L5 2 Q5.4 1.4 6 1.4Z" fill="#c4c4c4"/></svg>
<svg style="left:1396.5px;top:675.4px" width="12" height="10" viewBox="0 0 12 10"><path d="M6 8.6 Q6.6 8.6 7 8 L10.2 3 Q10.6 2 9.6 2 L2.4 2 Q1.4 2 1.8 3 L5 8 Q5.4 8.6 6 8.6Z" fill="#c4c4c4"/></svg>
<svg style="left:462px;top:41px" width="14" height="14" viewBox="0 0 14 14">
<defs><linearGradient id="gt" x1="0" y1="0" x2="1" y2="1"><stop offset="0" stop-color="#82c382"/><stop offset="0.55" stop-color="#61a562"/><stop offset="1" stop-color="#3a7e3f"/></linearGradient></defs>
<rect x="1.7" y="0" width="11.3" height="12.6" fill="url(#gt)"/><rect x="12.2" y="0.5" width="0.8" height="12.1" fill="#2c5a31"/><rect x="1.7" y="11.8" width="11.3" height="0.8" fill="#2c5a31"/>
<rect x="4.6" y="2.6" width="5.6" height="2.9" fill="#8dcc8e" stroke="#4a964e" stroke-width="0.9"/>
<rect x="0" y="0" width="1.8" height="12.4" fill="#262626"/>
<path d="M0 0h1.8v1h-1.8z M0 2h1.8v1h-1.8z M0 4h1.8v1h-1.8z M0 6h1.8v1h-1.8z M0 8h1.8v1h-1.8z M0 10h1.8v1h-1.8z M0 12h1.8v0.4h-1.8z" fill="#f2f2f2"/>
</svg>
<svg style="left:1285px;top:38px" width="115" height="20" viewBox="0 0 115 20"><path d="M6 9.5 H16.2" stroke="#fff" stroke-width="1.1"/><rect x="52.5" y="5.5" width="9" height="9" rx="0.8" fill="none" stroke="#fff" stroke-width="1.1"/><path d="M98 5 L108 15 M108 5 L98 15" stroke="#fff" stroke-width="1.1"/></svg>
<div style="left:550px;top:128px;width:97px;height:22px;box-sizing:border-box;border:1px solid #9e9e9e;background:#fff;z-index:2"></div>
<div style="left:698px;top:128px;width:97px;height:22px;box-sizing:border-box;border:1px solid #9e9e9e;background:#fff;z-index:2"></div>
<div style="left:702px;top:160px;width:97px;height:22px;box-sizing:border-box;border:1px solid #9e9e9e;background:#fff;z-index:2"></div>
<div style="left:478px;top:185px;width:773px;height:181px;box-sizing:border-box;border:1px solid #000"></div>
<div style="left:478px;top:281px;width:773px;height:1px;background:#000"></div>
<div style="left:480px;top:186px;width:767px;height:20px;background:#d6dce8"></div>
<div style="left:480px;top:229px;width:767px;height:23px;background:#f2f2f2"></div>
<div style="left:480px;top:282px;width:767px;height:20px;background:#d6dce8"></div>
<div style="left:478px;top:365px;width:774px;height:121px;box-sizing:border-box;border:1px solid #000"></div>
<div style="left:479px;top:366px;width:768px;height:28px;background:#d6dce8"></div>
<div style="left:479px;top:424px;width:768px;height:30px;background:#f2f2f2"></div>
<svg style="left:1088px;top:398px" width="11" height="11" viewBox="0 0 11 11"><rect x="0.5" y="0.5" width="10" height="10" fill="#fff" stroke="#111" stroke-width="1"/><path d="M2.4 5 L4.4 7.4 L8.6 2.6" fill="none" stroke="#000" stroke-width="1.7"/></svg>
<svg style="left:1088px;top:428px" width="11" height="11" viewBox="0 0 11 11"><rect x="0.5" y="0.5" width="10" height="10" fill="#fff" stroke="#111" stroke-width="1"/></svg>
<svg style="left:1088px;top:458px" width="11" height="11" viewBox="0 0 11 11"><rect x="0.5" y="0.5" width="10" height="10" fill="#fff" stroke="#111" stroke-width="1"/><path d="M2.4 5 L4.4 7.4 L8.6 2.6" fill="none" stroke="#000" stroke-width="1.7"/></svg>
<span class="tx" id="t0" style="left:1.60px;top:9px;font-size:21.60px;color:#ffffff;letter-spacing:-0.468px;z-index:3;">All Access Objects</span>
<span class="tx" id="t1" style="left:1.60px;top:39px;font-size:10.80px;color:#3a3a3a;letter-spacing:-0.735px;font-style:italic;z-index:3;">Search...</span>
<span class="tx" id="t2" style="left:6.30px;top:69px;font-size:12.60px;color:#ffffff;letter-spacing:0.028px;font-weight:bold;z-index:3;">Queries</span>
<span class="tx" id="t3" style="left:35.80px;top:90px;font-size:11.60px;color:#ffffff;letter-spacing:-0.065px;z-index:3;">AttorneyFullNameQ</span>
<span class="tx" id="t4" style="left:35.80px;top:114px;font-size:11.60px;color:#ffffff;letter-spacing:-0.281px;z-index:3;">Case DetailsQ</span>
<span class="tx" id="t5" style="left:35.80px;top:138px;font-size:11.60px;color:#ffffff;letter-spacing:-0.157px;z-index:3;">CaseDefendantInsuranceCoverageQ</span>
<span class="tx" id="t6" style="left:35.80px;top:162px;font-size:11.60px;color:#ffffff;letter-spacing:-0.271px;z-index:3;">CaseMedicalQ</span>
<span class="tx" id="t7" style="left:35.80px;top:186px;font-size:11.60px;color:#ffffff;letter-spacing:-0.135px;z-index:3;">CasePlaintiffInsuranceCoverageQ</span>
<span class="tx" id="t8" style="left:35.80px;top:210px;font-size:11.60px;color:#ffffff;letter-spacing:0.020px;z-index:3;">PlaintiffFullNameQ</span>
<span class="tx" id="t9" style="left:6.30px;top:231px;font-size:12.60px;color:#ffffff;letter-spacing:-0.080px;font-weight:bold;z-index:3;">Forms</span>
<span class="tx" id="t10" style="left:35.80px;top:252px;font-size:11.60px;color:#ffffff;letter-spacing:-0.053px;z-index:3;">AttorneyLienF</span>
<span class="tx" id="t11" style="left:35.80px;top:276px;font-size:11.60px;color:#ffffff;letter-spacing:-0.141px;z-index:3;">CarrierSettlementF</span>
<span class="tx" id="t12" style="left:35.80px;top:300px;font-size:11.60px;color:#ffffff;letter-spacing:-0.483px;z-index:3;">CaseFileF</span>
<span class="tx" id="t13" style="left:35.80px;top:324px;font-size:11.60px;color:#ffffff;letter-spacing:0.011px;z-index:3;">ContactAttorneyF</span>
<span class="tx" id="t14" style="left:35.80px;top:348px;font-size:11.60px;color:#ffffff;letter-spacing:-0.058px;z-index:3;">ContactAutoInsuranceCarrierF</span>
<span class="tx" id="t15" style="left:35.80px;top:372px;font-size:11.60px;color:#ffffff;letter-spacing:-0.087px;z-index:3;">ContactHealthInsuranceCarrierF</span>
<span class="tx" id="t16" style="left:35.80px;top:396px;font-size:11.60px;color:#ffffff;letter-spacing:-0.206px;z-index:3;">ContactLawFirmF</span>
<span class="tx" id="t17" style="left:35.80px;top:420px;font-size:11.60px;color:#ffffff;letter-spacing:-0.111px;z-index:3;">ContactMedicalProvidersF</span>
<span class="tx" id="t18" style="left:35.80px;top:444px;font-size:11.60px;color:#ffffff;letter-spacing:-0.079px;z-index:3;">ContactPoliceDepartmentF</span>
<span class="tx" id="t19" style="left:35.80px;top:468px;font-size:11.60px;color:#ffffff;letter-spacing:0.090px;z-index:3;">DefendantInsuranceInformationF</span>
<span class="tx" id="t20" style="left:35.80px;top:492px;font-size:11.60px;color:#ffffff;letter-spacing:-0.117px;z-index:3;">HealthInsuranceLienF</span>
<span class="tx" id="t21" style="left:35.80px;top:516px;font-size:11.60px;color:#ffffff;letter-spacing:0.142px;z-index:3;">MainMenuF</span>
<span class="tx" id="t22" style="left:35.80px;top:540px;font-size:11.60px;color:#ffffff;letter-spacing:0.116px;z-index:3;">PlaintiffInsuranceInformationF</span>
<span class="tx" id="t23" style="left:35.80px;top:564px;font-size:11.60px;color:#ffffff;letter-spacing:0.109px;z-index:3;">PlaintiffMedicalBillingF</span>
<span class="tx" id="t24" style="left:35.80px;top:588px;font-size:11.60px;color:#ffffff;letter-spacing:-0.207px;z-index:3;">ProviderLienF</span>
<span class="tx" id="t25" style="left:6.30px;top:609px;font-size:12.60px;color:#ffffff;letter-spacing:-0.113px;font-weight:bold;z-index:3;">Reports</span>
<span class="tx" id="t26" style="left:35.80px;top:630px;font-size:11.60px;color:#ffffff;letter-spacing:-0.095px;z-index:3;">CaseDefendantInsuranceCoverageQ subreport</span>
<span class="tx" id="t27" style="left:35.80px;top:654px;font-size:11.60px;color:#ffffff;letter-spacing:-0.102px;z-index:3;">CaseMedicalQ subreport</span>
<span class="tx" id="t28" style="left:35.80px;top:678px;font-size:11.60px;color:#ffffff;letter-spacing:-0.078px;z-index:3;">CasePlaintiffInsuranceCoverageQ subreport</span>
<span class="tx" id="t29" style="left:35.80px;top:702px;font-size:11.60px;color:#262626;letter-spacing:-0.102px;z-index:3;">Testing Report Progress Included QueryTied To cAse ID</span>
<span class="tx" id="t30" style="left:6.30px;top:723px;font-size:12.60px;color:#ffffff;letter-spacing:0.148px;font-weight:bold;z-index:3;">Macros</span>
<span class="tx" id="t31" style="left:35.80px;top:744px;font-size:11.60px;color:#ffffff;letter-spacing:-0.283px;z-index:3;">NewCaseRecordTest</span>
<span class="tx" id="t32" style="left:35.80px;top:768px;font-size:11.60px;color:#ffffff;letter-spacing:-0.237px;z-index:3;">Test Macro New Case</span>
<span class="tx" id="t33" style="left:486.90px;top:43px;font-size:11.60px;color:#ffffff;letter-spacing:0.017px;z-index:3;">Testing Report Progress Included QueryTied To cAse ID</span>
<span class="tx" id="t34" style="left:478.80px;top:131px;font-size:13.30px;color:#787878;letter-spacing:-0.077px;z-index:3;">CaseFileID</span>
<span class="tx" id="t35" style="right:985.50px;top:133px;font-size:12.90px;color:#404040;letter-spacing:0.000px;z-index:3;">9</span>
<span class="tx" id="t36" style="left:699.20px;top:132px;font-size:13.30px;color:#404040;letter-spacing:0.077px;z-index:3;">Jason Stathom</span>
<span class="tx" id="t37" style="left:583.30px;top:163px;font-size:13.30px;color:#787878;letter-spacing:0.231px;z-index:1;">PropertyDamageVa</span>
<span class="tx" id="t38" style="left:733.10px;top:165px;font-size:12.90px;color:#404040;letter-spacing:-0.040px;z-index:3;">$5,000.00</span>
<span class="tx" id="t39" style="left:483.10px;top:188px;font-size:13.30px;color:#000000;letter-spacing:-0.154px;font-weight:bold;z-index:3;">Defendant Insurance</span>
<span class="tx" id="t40" style="left:775.10px;top:188px;font-size:13.30px;color:#787878;letter-spacing:0.182px;z-index:3;">InsuranceType</span>
<span class="tx" id="t41" style="left:998.90px;top:188px;font-size:13.30px;color:#787878;letter-spacing:0.394px;z-index:3;">Limits</span>
<span class="tx" id="t42" style="left:480.10px;top:211px;font-size:13.30px;color:#404040;letter-spacing:-0.003px;z-index:3;">AAA</span>
<span class="tx" id="t43" style="left:700.00px;top:211px;font-size:13.30px;color:#404040;letter-spacing:0.493px;z-index:3;">Liability</span>
<span class="tx" id="t44" style="left:978.80px;top:211px;font-size:12.90px;color:#404040;letter-spacing:-0.063px;z-index:3;">$15,000.00</span>
<span class="tx" id="t45" style="left:1090.00px;top:211px;font-size:12.90px;color:#404040;letter-spacing:-0.063px;z-index:3;">$35,000.00</span>
<span class="tx" id="t46" style="left:480.10px;top:234px;font-size:13.30px;color:#404040;letter-spacing:0.288px;z-index:3;">National General</span>
<span class="tx" id="t47" style="left:700.00px;top:234px;font-size:13.30px;color:#404040;letter-spacing:0.493px;z-index:3;">Liability</span>
<span class="tx" id="t48" style="left:978.80px;top:234px;font-size:12.90px;color:#404040;letter-spacing:-0.063px;z-index:3;">$50,000.00</span>
<span class="tx" id="t49" style="left:1082.90px;top:234px;font-size:12.90px;color:#404040;letter-spacing:-0.062px;z-index:3;">$100,000.00</span>
<span class="tx" id="t50" style="left:480.10px;top:257px;font-size:13.30px;color:#404040;letter-spacing:0.499px;z-index:3;">Allstate</span>
<span class="tx" id="t51" style="left:700.00px;top:257px;font-size:13.30px;color:#404040;letter-spacing:0.425px;z-index:3;">Umbrella</span>
<span class="tx" id="t52" style="left:978.80px;top:257px;font-size:12.90px;color:#404040;letter-spacing:-0.063px;z-index:3;">$70,000.00</span>
<span class="tx" id="t53" style="left:1122.20px;top:257px;font-size:12.90px;color:#404040;letter-spacing:-0.113px;z-index:3;">$0.00</span>
<span class="tx" id="t54" style="left:484.90px;top:284px;font-size:13.30px;color:#000000;letter-spacing:-0.130px;font-weight:bold;z-index:3;">Planintiff Insurance</span>
<span class="tx" id="t55" style="left:480.10px;top:306px;font-size:13.30px;color:#404040;letter-spacing:0.129px;z-index:3;">Amica</span>
<span class="tx" id="t56" style="left:700.00px;top:306px;font-size:13.30px;color:#404040;letter-spacing:0.425px;z-index:3;">Umbrella</span>
<span class="tx" id="t57" style="left:982.00px;top:307px;font-size:12.90px;color:#404040;letter-spacing:-0.093px;z-index:3;">$25,000.00</span>
<span class="tx" id="t58" style="left:1090.00px;top:307px;font-size:12.90px;color:#404040;letter-spacing:-0.063px;z-index:3;">$50,000.00</span>
<span class="tx" id="t59" style="left:538.80px;top:372px;font-size:13.30px;color:#787878;letter-spacing:-0.097px;z-index:3;">CaseFileID</span>
<span class="tx" id="t60" style="left:609.20px;top:372px;font-size:13.30px;color:#787878;letter-spacing:0.430px;z-index:3;">MedicalProvider</span>
<span class="tx" id="t61" style="left:1088.80px;top:372px;font-size:13.30px;color:#787878;letter-spacing:0.369px;z-index:3;">BillOnFile</span>
<span class="tx" id="t62" style="left:1190.90px;top:372px;font-size:13.30px;color:#787878;letter-spacing:0.530px;z-index:3;">BillTotal</span>
<span class="tx" id="t63" style="left:595.40px;top:403px;font-size:12.90px;color:#404040;letter-spacing:0.628px;z-index:3;">9</span>
<span class="tx" id="t64" style="left:610.20px;top:402px;font-size:13.30px;color:#404040;letter-spacing:-0.641px;z-index:3;">PCP Cares</span>
<span class="tx" id="t65" style="left:1169.90px;top:403px;font-size:12.90px;color:#404040;letter-spacing:-0.063px;z-index:3;">$15,000.00</span>
<span class="tx" id="t66" style="left:595.40px;top:433px;font-size:12.90px;color:#404040;letter-spacing:0.628px;z-index:3;">9</span>
<span class="tx" id="t67" style="left:610.20px;top:432px;font-size:13.30px;color:#404040;letter-spacing:0.234px;z-index:3;">Othro One</span>
<span class="tx" id="t68" style="left:1188.00px;top:433px;font-size:12.90px;color:#404040;letter-spacing:-0.116px;z-index:3;">$500.00</span>
<span class="tx" id="t69" style="left:595.40px;top:463px;font-size:12.90px;color:#404040;letter-spacing:0.628px;z-index:3;">9</span>
<span class="tx" id="t70" style="left:610.20px;top:462px;font-size:13.30px;color:#404040;letter-spacing:0.234px;z-index:3;">Othro One</span>
<span class="tx" id="t71" style="left:1169.90px;top:463px;font-size:12.90px;color:#404040;letter-spacing:-0.063px;z-index:3;">$10,000.00</span>
</body></html>
